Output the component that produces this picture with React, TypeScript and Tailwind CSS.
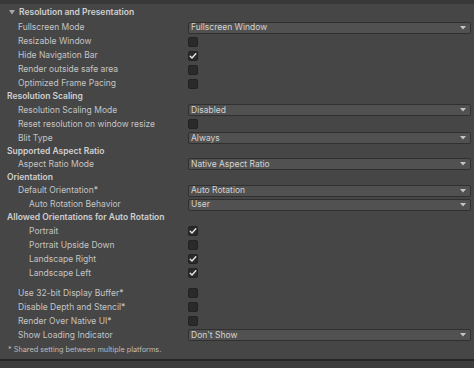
import React from "react";

type Row =
  | { kind: "header"; label: string }
  | { kind: "check"; label: string; checked: boolean; indent: number }
  | { kind: "drop"; label: string; value: string; indent: number }
  | { kind: "gap" };

const rows: Row[] = [
  { kind: "drop", label: "Fullscreen Mode", value: "Fullscreen Window", indent: 1 },
  { kind: "check", label: "Resizable Window", checked: false, indent: 1 },
  { kind: "check", label: "Hide Navigation Bar", checked: true, indent: 1 },
  { kind: "check", label: "Render outside safe area", checked: false, indent: 1 },
  { kind: "check", label: "Optimized Frame Pacing", checked: false, indent: 1 },
  { kind: "header", label: "Resolution Scaling" },
  { kind: "drop", label: "Resolution Scaling Mode", value: "Disabled", indent: 1 },
  { kind: "check", label: "Reset resolution on window resize", checked: false, indent: 1 },
  { kind: "drop", label: "Blit Type", value: "Always", indent: 1 },
  { kind: "header", label: "Supported Aspect Ratio" },
  { kind: "drop", label: "Aspect Ratio Mode", value: "Native Aspect Ratio", indent: 1 },
  { kind: "header", label: "Orientation" },
  { kind: "drop", label: "Default Orientation*", value: "Auto Rotation", indent: 1 },
  { kind: "drop", label: "Auto Rotation Behavior", value: "User", indent: 2 },
  { kind: "header", label: "Allowed Orientations for Auto Rotation" },
  { kind: "check", label: "Portrait", checked: true, indent: 2 },
  { kind: "check", label: "Portrait Upside Down", checked: false, indent: 2 },
  { kind: "check", label: "Landscape Right", checked: true, indent: 2 },
  { kind: "check", label: "Landscape Left", checked: true, indent: 2 },
  { kind: "gap" },
  { kind: "check", label: "Use 32-bit Display Buffer*", checked: false, indent: 1 },
  { kind: "check", label: "Disable Depth and Stencil*", checked: false, indent: 1 },
  { kind: "check", label: "Render Over Native UI*", checked: false, indent: 1 },
  { kind: "drop", label: "Show Loading Indicator", value: "Don't Show", indent: 1 },
];

function Checkbox({ checked }: { checked: boolean }) {
  return (
    <div className="w-[10px] h-[10px] rounded-[2px] bg-[#2a2a2a] border border-[#222222] flex items-center justify-center">
      {checked && (
        <svg width="8" height="8" viewBox="0 0 8 8">
          <polyline points="1.2,4.3 3,6 6.8,1.8" fill="none" stroke="#e8e8e8" strokeWidth="1.4" strokeLinecap="round" strokeLinejoin="round" />
        </svg>
      )}
    </div>
  );
}

function Dropdown({ value }: { value: string }) {
  return (
    <div className="flex-1 h-[12px] rounded-[2px] bg-[#515151] border border-[#303030] flex items-center justify-between pl-[2px] pr-[4px]">
      <span className="text-[#d4d4d4] leading-none">{value}</span>
      <svg width="6" height="4" viewBox="0 0 6 4">
        <polygon points="0,0 6,0 3,3.5" fill="#c4c4c4" />
      </svg>
    </div>
  );
}

export default function App() {
  return (
    <div
      className="w-[474px] h-[368px] bg-[#464646] flex flex-col text-[8.5px] text-[#c4c4c4] overflow-hidden"
      style={{ fontFamily: "Inter, 'Noto Sans', sans-serif" }}
    >
      <div className="h-[4px] bg-[#383838]" />
      <div className="h-[16.7px] flex items-center pl-[9px] gap-[4px]">
        <svg width="6" height="5" viewBox="0 0 6 5">
          <polygon points="0,0 6,0 3,4.5" fill="#a8a8a8" />
        </svg>
        <span className="font-semibold text-[#d0d0d0]">Resolution and Presentation</span>
      </div>
      {rows.map((r, i) => {
        if (r.kind === "gap") return <div key={i} className="h-[6.4px]" />;
        if (r.kind === "header")
          return (
            <div key={i} className="h-[12.3px] flex items-center pl-[7px] font-semibold text-[#d0d0d0]">
              {r.label}
            </div>
          );
        return (
          <div key={i} className="h-[14px] flex items-center pr-[3px]">
            <div className={r.indent === 2 ? "w-[188px] pl-[29px]" : "w-[188px] pl-[18px]"}>{r.label}</div>
            {r.kind === "check" ? <Checkbox checked={r.checked} /> : <Dropdown value={r.value} />}
          </div>
        );
      })}
      <div className="h-[17px] flex items-center pl-[8px] text-[7.3px] text-[#bdbdbd]">
        * Shared setting between multiple platforms.
      </div>
      <div className="h-[2px] bg-[#262626]" />
      <div className="flex-1 bg-[#3c3c3c]" />
    </div>
  );
}
